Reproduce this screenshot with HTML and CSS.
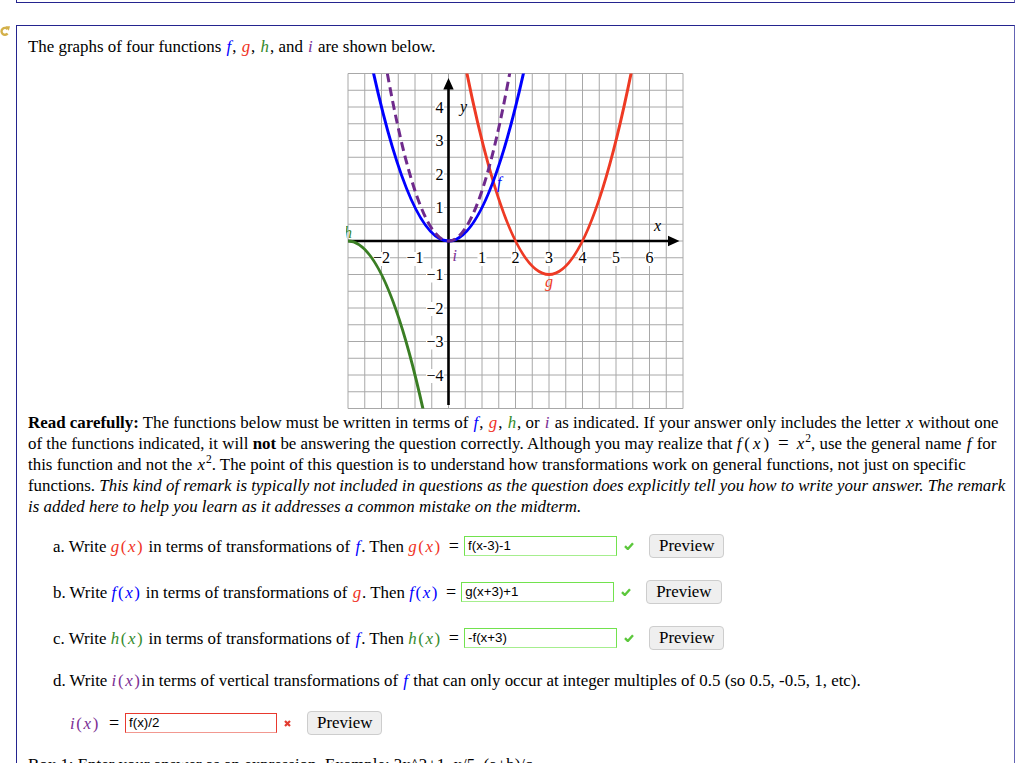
FILE: index.html
```html
<!DOCTYPE html>
<html>
<head>
<meta charset="utf-8">
<link rel="stylesheet" href="styles.css">
</head>
<body>
<div class="page">
  <div class="prev"></div>
  <div class="problem-wrap">
    <svg class="refresh" width="10" height="11" viewBox="0 0 10 11">
      <path d="M7.6 4.2 A3.4 3.4 0 1 0 7.6 8.4" fill="none" stroke="#d3b04a" stroke-width="2.4"/>
      <path d="M5.4 1.2 L10 1.2 L8.8 5.8 Z" fill="#d3b04a"/>
    </svg>
    <div class="problem">
      <p class="intro">The graphs of four functions <i class="mi cf">f</i>, <i class="mi cg">g</i>, <i class="mi ch">h</i>, and <i class="mi ci">i</i> are shown below.</p>

      <div class="graph">
        <svg width="340" height="340" viewBox="0 0 340 340">
          <defs>
            <clipPath id="gridclip"><rect x="2" y="1.5" width="335" height="335"/></clipPath>
          </defs>
          <path class="grid" d="M2 1.5V336.5M18.75 1.5V336.5M35.5 1.5V336.5M52.25 1.5V336.5M69 1.5V336.5M85.75 1.5V336.5M102.5 1.5V336.5M119.25 1.5V336.5M136 1.5V336.5M152.75 1.5V336.5M169.5 1.5V336.5M186.25 1.5V336.5M203 1.5V336.5M219.75 1.5V336.5M236.5 1.5V336.5M253.25 1.5V336.5M270 1.5V336.5M286.75 1.5V336.5M303.5 1.5V336.5M320.25 1.5V336.5M337 1.5V336.5M2 1.5H337M2 18.25H337M2 35H337M2 51.75H337M2 68.5H337M2 85.25H337M2 102H337M2 118.75H337M2 135.5H337M2 152.25H337M2 169H337M2 185.75H337M2 202.5H337M2 219.25H337M2 236H337M2 252.75H337M2 269.5H337M2 286.25H337M2 303H337M2 319.75H337M2 336.5H337"/>

          <g class="lblbg">
            <rect x="27" y="180" width="17" height="14"/>
            <rect x="60.5" y="180" width="17" height="14"/>
            <rect x="131.5" y="180" width="9" height="14"/>
            <rect x="165" y="180" width="9" height="14"/>
            <rect x="198.5" y="180" width="9" height="14"/>
            <rect x="232" y="180" width="9" height="14"/>
            <rect x="265.5" y="180" width="9" height="14"/>
            <rect x="299" y="180" width="9" height="14"/>
            <rect x="89" y="29" width="9" height="14"/>
            <rect x="89" y="62.5" width="9" height="14"/>
            <rect x="89" y="96" width="9" height="14"/>
            <rect x="89" y="129.5" width="9" height="14"/>
            <rect x="80" y="196.5" width="18" height="14"/>
            <rect x="80" y="230" width="18" height="14"/>
            <rect x="80" y="263.5" width="18" height="14"/>
            <rect x="80" y="297" width="18" height="14"/>
          </g>

          <g class="ticks">
            <text x="35.5" y="191" text-anchor="middle">−2</text>
            <text x="69" y="191" text-anchor="middle">−1</text>
            <text x="136" y="191" text-anchor="middle">1</text>
            <text x="169.5" y="191" text-anchor="middle">2</text>
            <text x="203" y="191" text-anchor="middle">3</text>
            <text x="236.5" y="191" text-anchor="middle">4</text>
            <text x="270" y="191" text-anchor="middle">5</text>
            <text x="303.5" y="191" text-anchor="middle">6</text>
            <text x="97.5" y="40.5" text-anchor="end">4</text>
            <text x="97.5" y="74" text-anchor="end">3</text>
            <text x="97.5" y="107.5" text-anchor="end">2</text>
            <text x="97.5" y="141" text-anchor="end">1</text>
            <text x="97.5" y="208" text-anchor="end">−1</text>
            <text x="97.5" y="241.5" text-anchor="end">−2</text>
            <text x="97.5" y="275" text-anchor="end">−3</text>
            <text x="97.5" y="308.5" text-anchor="end">−4</text>
          </g>

          <path class="axis" d="M2 169H324M102.5 333V16"/>
          <path class="arrow" d="M333.5 169L322 163.8L322 174.2Z M102.5 6L97.3 17.5L107.7 17.5Z"/>

          <g clip-path="url(#gridclip)">
            <path class="curve hcurve" d="M2 169 Q42.2 169 82.4 362"/>
            <path class="curve gcurve" d="M119.25 -6.9 Q203 411.9 286.75 -6.9"/>
            <path class="curve fcurve" d="M25.45 -8.2 Q102.5 346.2 179.55 -8.2"/>
            <path class="curve icurve" d="M38.85 -12.4 Q102.5 350.4 166.15 -12.4"/>
          </g>

          <text class="lbl" x="114" y="40">y</text>
          <text class="lbl" x="308" y="159">x</text>
          <text class="lbl cfill" x="151" y="116">f</text>
          <text class="lbl gfill" x="199" y="215">g</text>
          <text class="lbl ifill" x="106.5" y="189">i</text>
          <text class="lbl hfill" x="-2" y="166">h</text>
        </svg>
      </div>

      <p class="note"><b>Read carefully:</b> The functions below must be written in terms of <i class="mi cf">f</i>, <i class="mi cg">g</i>, <i class="mi ch">h</i>, or <i class="mi ci">i</i> as indicated. If your answer only includes the letter <i class="mi">x</i> without one<br>of the functions indicated, it will <b>not</b> be answering the question correctly. Although you may realize that <span class="mx"><i>f</i>(<i>x</i>)</span><span class="eq">=</span><i class="mi">x</i><span class="sup">2</span>, use the general name <i class="mi">f</i> for<br>this function and not the <i class="mi">x</i><span class="sup">2</span>. The point of this question is to understand how transformations work on general functions, not just on specific<br>functions. <i>This kind of remark is typically not included in questions as the question does explicitly tell you how to write your answer. The remark<br>is added here to help you learn as it addresses a common mistake on the midterm.</i></p>

      <div class="items">
        <div class="row">
          <span>a. Write <span class="mx cg"><i>g</i>(<i>x</i>)</span> in terms of transformations of <i class="mi cf">f</i>. Then <span class="mx cg"><i>g</i>(<i>x</i>)</span></span>
          <span class="eq">=</span>
          <span class="answer ok">f(x-3)-1</span>
          <svg class="mark" width="10" height="8" viewBox="0 0 10 8"><path d="M1 4.2L3.8 7L9 1.2" fill="none" stroke="#5cc83c" stroke-width="2.4"/></svg>
          <span class="btn">Preview</span>
        </div>
        <div class="row">
          <span>b. Write <span class="mx cf"><i>f</i>(<i>x</i>)</span> in terms of transformations of <i class="mi cg">g</i>. Then <span class="mx cf"><i>f</i>(<i>x</i>)</span></span>
          <span class="eq">=</span>
          <span class="answer ok">g(x+3)+1</span>
          <svg class="mark" width="10" height="8" viewBox="0 0 10 8"><path d="M1 4.2L3.8 7L9 1.2" fill="none" stroke="#5cc83c" stroke-width="2.4"/></svg>
          <span class="btn">Preview</span>
        </div>
        <div class="row">
          <span>c. Write <span class="mx ch"><i>h</i>(<i>x</i>)</span> in terms of transformations of <i class="mi cf">f</i>. Then <span class="mx ch"><i>h</i>(<i>x</i>)</span></span>
          <span class="eq">=</span>
          <span class="answer ok">-f(x+3)</span>
          <svg class="mark" width="10" height="8" viewBox="0 0 10 8"><path d="M1 4.2L3.8 7L9 1.2" fill="none" stroke="#5cc83c" stroke-width="2.4"/></svg>
          <span class="btn">Preview</span>
        </div>
        <p class="dline">d. Write <span class="mx ci"><i>i</i>(<i>x</i>)</span>in terms of vertical transformations of <i class="mi cf">f</i> that can only occur at integer multiples of 0.5 (so 0.5, -0.5, 1, etc).</p>
        <div class="row irow">
          <span class="mx ci"><i>i</i>(<i>x</i>)</span>
          <span class="eq">=</span>
          <span class="answer bad">f(x)/2</span>
          <svg class="xmark" width="7" height="7" viewBox="0 0 7 7"><path d="M1 1L6 6M6 1L1 6" stroke="#e23b30" stroke-width="2.2"/></svg>
          <span class="btn">Preview</span>
        </div>
      </div>
      <p class="boxline">Box 1: Enter your answer as an expression. Example: 3x^2+1, x/5, (a+b)/c</p>
    </div>
  </div>
</div>
</body>
</html>
```

FILE: styles.css
```css
html { overflow: hidden; }
body {
  margin: 0;
  background: #fff;
  color: #000;
  font-family: "Liberation Serif", "Times New Roman", serif;
  font-size: 16.9px;
}
.page { padding: 0 9px 0 16px; }
.prev {
  height: 2px;
  border: 1px solid #24248f;
  border-top: none;
  border-right-color: #6464b4;
}
.problem-wrap { position: relative; margin-top: 22px; }
.refresh { position: absolute; left: -16px; top: 0; }
.problem {
  border: 1px solid #24248f;
  border-right-color: #6464b4;
  padding: 10px 11px 0 11px;
  line-height: 21px;
}
p { margin: 0; }
.graph { display: flex; justify-content: center; margin-top: 15px; }
.graph svg { display: block; }
.grid { stroke: #a8a8a8; stroke-width: 1; fill: none; }
.lblbg rect { fill: #fff; }
.ticks text { font-family: "Liberation Serif", serif; font-size: 16px; fill: #000; }
.axis { stroke: #000; stroke-width: 2.6; fill: none; }
.arrow { fill: #000; }
.curve { fill: none; stroke-width: 3; }
.fcurve { stroke: #0000ff; }
.gcurve { stroke: #ee3a24; }
.hcurve { stroke: #3a7e24; }
.icurve { stroke: #6f2a8c; stroke-dasharray: 9 5; }
.lbl { font-family: "Liberation Serif", serif; font-style: italic; font-size: 16px; fill: #000; }
.cfill { fill: #0000ff; }
.gfill { fill: #ee3a24; }
.hfill { fill: #3a8a2a; }
.ifill { fill: #7b2f94; }

.cf { color: #0000ff; }
.cg { color: #f0321e; }
.ch { color: #348a2c; }
.ci { color: #7b2f94; }
.mi { padding: 0 1px; }
.mx { letter-spacing: 1.6px; }
.mx i { font-style: italic; }
.eq { margin: 0 5px 0 7px; font-size: 18px; }
.sup { font-size: 11.5px; vertical-align: 7px; line-height: 0; }

.note { white-space: nowrap; }
.note .mx { letter-spacing: 3px; }
.note .eq { margin: 0 7px 0 6px; font-size: 19px; line-height: 0; }
.items { padding-left: 25px; }
.row {
  display: flex;
  align-items: center;
  height: 24px;
  margin-top: 22px;
  white-space: nowrap;
}
.items .row:first-child { margin-top: 17px; }
.answer {
  box-sizing: border-box;
  width: 153px;
  height: 20px;
  padding: 0 3px;
  font-family: "Liberation Sans", Arial, sans-serif;
  font-size: 13.33px;
  line-height: 18px;
  color: #000;
  background: #fff;
}
.answer.ok { border: 1px solid #72e24e; border-bottom-color: #a6ee8e; }
.answer.bad { border: 1px solid #e8392e; border-bottom-color: #f29890; width: 152px; }
.mark { margin-left: 7px; }
.xmark { margin-left: 7px; }
.btn {
  box-sizing: border-box;
  height: 24px;
  padding: 0 9px;
  margin-left: 15px;
  line-height: 22px;
  background: #efefef;
  border: 1px solid #cdcdcd;
  border-radius: 4px;
  color: #000;
}
.irow .btn { margin-left: 16px; }
.irow .eq { margin: 0 6px 0 9px; }
.dline { margin-top: 20px; }
.irow { padding-left: 17px; margin-top: 20px !important; }
.boxline { margin-top: 19px; }
```
